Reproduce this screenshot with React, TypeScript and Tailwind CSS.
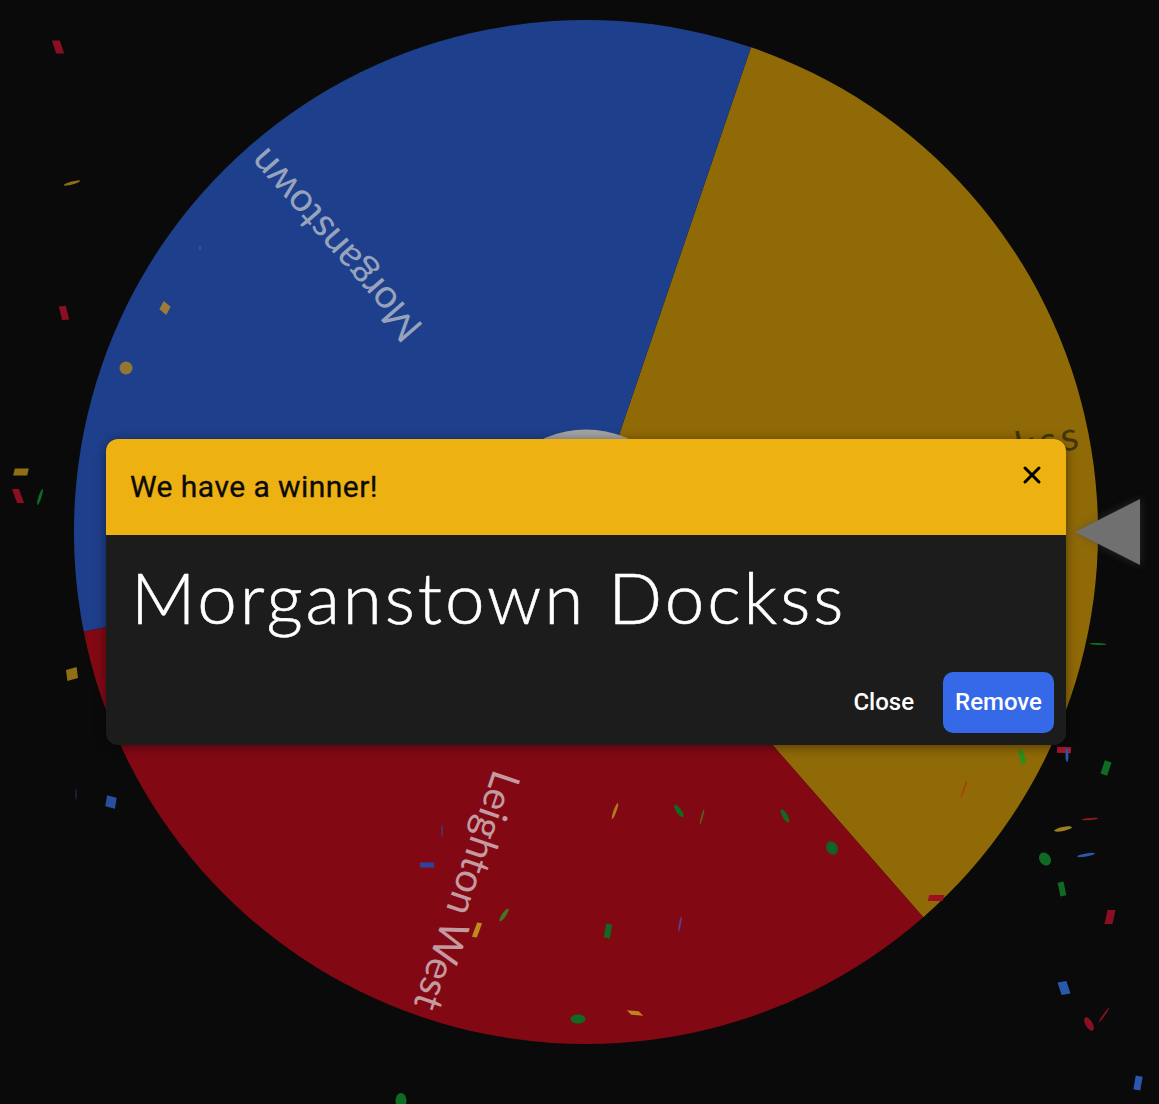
import { X } from "lucide-react";

type C = { k: "r" | "e"; x: number; y: number; w: number; h: number; a: number; c: string; s?: number };

const RED = "#8a0f22";
const GREEN = "#0f6b22";
const BLUE = "#2a58ad";
const GOLD = "#8f6f14";

const confetti: C[] = [
  { k: "r", x: 58, y: 47, w: 8, h: 13, a: 0, s: 18, c: RED },
  { k: "e", x: 72, y: 183, w: 17, h: 3, a: -15, c: GOLD },
  { k: "r", x: 64, y: 313, w: 7, h: 14, a: -6, s: 8, c: RED },
  { k: "r", x: 165, y: 308, w: 9, h: 9, a: 40, s: 12, c: "#9c7c3a" },
  { k: "e", x: 126, y: 368, w: 13, h: 13, a: 0, c: "#947632" },
  { k: "e", x: 200, y: 248, w: 2, h: 4, a: 0, c: "#47588a" },
  { k: "r", x: 21, y: 472, w: 14, h: 7, a: 0, s: -14, c: GOLD },
  { k: "r", x: 18, y: 496, w: 7, h: 14, a: 0, s: 20, c: RED },
  { k: "e", x: 40, y: 497, w: 3, h: 17, a: 18, c: GREEN },
  { k: "r", x: 72, y: 674, w: 11, h: 11, a: -15, s: -8, c: GOLD },
  { k: "r", x: 111, y: 802, w: 10, h: 11, a: 15, s: 6, c: "#274f9c" },
  { k: "e", x: 76, y: 794, w: 1.5, h: 12, a: 0, c: "#1c2a40" },
  { k: "r", x: 427, y: 865, w: 14, h: 5, a: 0, s: 6, c: "#2d43a0" },
  { k: "e", x: 442, y: 831, w: 1.5, h: 13, a: 0, c: "#4a3a80" },
  { k: "e", x: 615, y: 811, w: 3, h: 17, a: 20, c: "#b07a22" },
  { k: "e", x: 679, y: 811, w: 5, h: 15, a: -35, c: GREEN },
  { k: "e", x: 702, y: 817, w: 2, h: 16, a: 15, c: "#5b5a22" },
  { k: "e", x: 785, y: 816, w: 5, h: 15, a: -30, c: GREEN },
  { k: "e", x: 832, y: 848, w: 11, h: 14, a: -30, c: "#0f6422" },
  { k: "e", x: 964, y: 789, w: 2, h: 18, a: 20, c: "#a8400e" },
  { k: "r", x: 1022, y: 757, w: 5, h: 14, a: -15, c: "#2e8d1c" },
  { k: "r", x: 936, y: 898, w: 15, h: 6, a: 0, s: -15, c: "#9c1020" },
  { k: "r", x: 1064, y: 750, w: 14, h: 6, a: 3, c: "#a81830" },
  { k: "e", x: 1067, y: 755, w: 3, h: 14, a: 0, c: BLUE },
  { k: "r", x: 1106, y: 768, w: 7, h: 14, a: 18, c: GREEN },
  { k: "e", x: 1090, y: 819, w: 17, h: 2, a: -5, c: "#8a1a22" },
  { k: "e", x: 1063, y: 829, w: 18, h: 4, a: -12, c: "#a0801e" },
  { k: "e", x: 1086, y: 855, w: 18, h: 3, a: -10, c: BLUE },
  { k: "e", x: 1045, y: 859, w: 11, h: 14, a: -35, c: GREEN },
  { k: "r", x: 1062, y: 889, w: 6, h: 14, a: -12, c: GREEN },
  { k: "r", x: 1110, y: 917, w: 8, h: 14, a: 0, s: -12, c: RED },
  { k: "r", x: 1064, y: 988, w: 9, h: 13, a: -10, s: 8, c: BLUE },
  { k: "e", x: 1104, y: 1015, w: 2, h: 18, a: 35, c: RED },
  { k: "e", x: 1089, y: 1024, w: 7, h: 15, a: -30, c: RED },
  { k: "r", x: 1138, y: 1083, w: 7, h: 14, a: 10, c: BLUE },
  { k: "e", x: 401, y: 1101, w: 11, h: 16, a: 0, c: GREEN },
  { k: "e", x: 578, y: 1019, w: 15, h: 9, a: 0, c: GREEN },
  { k: "r", x: 635, y: 1013, w: 12, h: 4, a: 5, s: 50, c: "#c0841e" },
  { k: "r", x: 477, y: 930, w: 5, h: 15, a: 8, s: -12, c: "#c08a1e" },
  { k: "e", x: 504, y: 915, w: 4, h: 15, a: 35, c: "#3f7a22" },
  { k: "r", x: 608, y: 931, w: 6, h: 14, a: 10, c: GREEN },
  { k: "e", x: 680, y: 924, w: 2, h: 16, a: 12, c: "#5e3f8a" },
  { k: "e", x: 1098, y: 644, w: 17, h: 2, a: 3, c: GREEN },
];

const Title = { fontFamily: "Roboto, sans-serif" };
const Wheel = "Lato, sans-serif";

function WheelText({ a, text, fill, len, r, y }: { a: number; text: string; fill: string; len: number; r: number; y: number }) {
  return (
    <text
      x={r}
      y={y}
      textAnchor="end"
      fontSize={40}
      fill={fill}
      fontFamily={Wheel}
      textLength={len}
      lengthAdjust="spacing"
      transform={`translate(586 532) rotate(${a})`}
    >
      {text}
    </text>
  );
}

export default function App() {
  return (
    <div className="relative h-[1104px] w-[1159px] overflow-hidden bg-[#0a0a0a]">
      <svg width={1159} height={1104} viewBox="0 0 1159 1104" className="block">
        <path d="M586 532 L751 47.3 A512 512 0 0 1 923.3 917.2 Z" fill="#906a07" />
        <path d="M586 532 L923.3 917.2 A512 512 0 0 1 83.7 631.4 Z" fill="#820914" />
        <path d="M586 532 L83.7 631.4 A512 512 0 0 1 751 47.3 Z" fill="#1e3f8b" />
        <circle cx={586} cy={532} r={102.5} fill="#a3a3a3" />
        <WheelText a={228.8} text="Morganstown" fill="#97a3bd" len={240} r={501} y={14} />
        <WheelText a={108.8} text="Leighton West" fill="#c49aa0" len={250} r={503} y={11} />
        <WheelText a={-11.2} text="Morganstown Dockss" fill="#453708" len={450} r={501} y={14} />
        <polygon
          points="1075,532 1140,499 1140,565"
          fill="#707070"
          style={{ filter: "drop-shadow(0 0 4px rgba(70,70,70,0.55))" }}
        />
        {confetti.map((c, i) => {
          const tr = `rotate(${c.a} ${c.x} ${c.y})`;
          return c.k === "r" ? (
            <rect
              key={i}
              x={-c.w / 2}
              y={-c.h / 2}
              width={c.w}
              height={c.h}
              fill={c.c}
              transform={`${tr} translate(${c.x} ${c.y}) skewX(${c.s ?? 0})`}
            />
          ) : (
            <ellipse key={i} cx={c.x} cy={c.y} rx={c.w / 2} ry={c.h / 2} fill={c.c} transform={tr} />
          );
        })}
      </svg>

      <div
        className="absolute left-[106px] top-[439px] flex h-[306px] w-[960px] flex-col overflow-hidden rounded-[12px] bg-[#1c1c1c] shadow-[0_2px_12px_rgba(0,0,0,0.45)]"
        style={Title}
      >
        <div className="flex h-[96px] items-center justify-between bg-[#edb111] pl-[24px] pr-[20px]">
          <span className="text-[30px] font-normal leading-none tracking-[0.45px] text-[#0a0a0a] [-webkit-text-stroke:0.3px_#0a0a0a]">
            We have a winner!
          </span>
          <button className="mb-[24px] flex h-[28px] w-[28px] items-center justify-center text-black">
            <X size={28} strokeWidth={2.6} />
          </button>
        </div>
        <div className="flex-1 pl-[25px] pt-[18px]">
          <p
            className="text-[71px] font-light leading-[88px] tracking-[2.9px] text-white [-webkit-text-stroke:0.6px_white]"
            style={{ fontFamily: Wheel }}
          >
            Morganstown Dockss
          </p>
        </div>
        <div className="flex items-center justify-end gap-[12px] pb-[12px] pr-[12px]">
          <button className="h-[61px] px-[17px] pb-[2px] text-[24px] font-medium text-white">Close</button>
          <button className="h-[61px] w-[111px] rounded-[10px] bg-[#3569e7] pb-[2px] text-[24px] font-medium text-white">
            Remove
          </button>
        </div>
      </div>
    </div>
  );
}
